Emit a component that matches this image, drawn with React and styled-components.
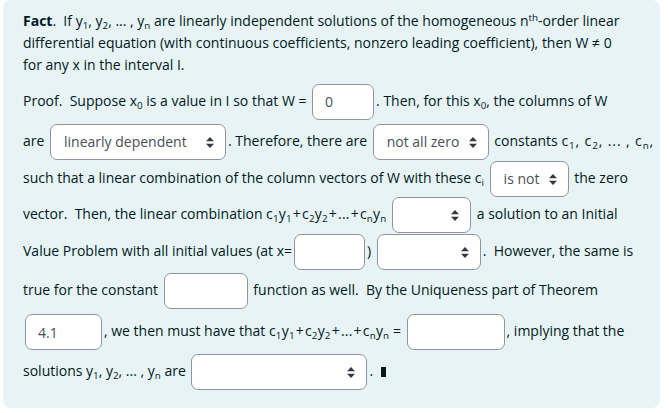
import styled, { createGlobalStyle } from "styled-components";

const GlobalStyle = createGlobalStyle`
  html, body {
    margin: 0;
    padding: 0;
    background: #ffffff;
  }
  body {
    font-family: "Open Sans", "Noto Sans", sans-serif;
    font-size: 14px;
    color: #001a1e;
  }
`;

const Card = styled.div`
  margin: 0 9px 0 3px;
  height: 408px;
  box-sizing: border-box;
  padding: 10px 20px 0;
  background: #e7f3f5;
  border-radius: 8px;
`;

const Fact = styled.p`
  margin: 0 0 5px;
  line-height: 22px;
  white-space: nowrap;
`;

const Line = styled.div`
  height: ${(p) => p.$h}px;
  line-height: ${(p) => p.$h}px;
  white-space: nowrap;
`;

const Field = styled.input`
  box-sizing: border-box;
  width: ${(p) => p.$w}px;
  height: 36px;
  margin: 0 2px;
  padding: 0 12px;
  vertical-align: middle;
  border: 1px solid #8f959e;
  border-radius: 7px;
  background: #ffffff;
  font: inherit;
  color: #495057;
  outline: none;
`;

const SelectBox = styled.span`
  box-sizing: border-box;
  display: inline-flex;
  align-items: center;
  justify-content: space-between;
  width: ${(p) => p.$w}px;
  height: 36px;
  margin: 0 2px;
  padding: 0 11px 0 13px;
  vertical-align: middle;
  border: 1px solid #8f959e;
  border-radius: 7px;
  background: #ffffff;
  color: #495057;
  line-height: 1;
`;

const Sub = styled.sub`
  font-size: 70%;
  line-height: 0;
  vertical-align: -0.3em;
`;

const Sup = styled.sup`
  font-size: 70%;
  line-height: 0;
  vertical-align: 0.55em;
`;

const Math = styled.span`
  letter-spacing: ${(p) => p.$ls || 0}px;
`;

const Plus = styled.span`
  margin: 0 1px;
`;

const Qed = styled.span`
  display: inline-block;
  width: 5px;
  height: 10px;
  margin-left: 8px;
  background: #001a1e;
  vertical-align: -1px;
`;

const Arrows = () => (
  <svg width="8" height="11" viewBox="0 0 8 11">
    <path d="M0 4.2 L4 0 L8 4.2 Z M0 6.8 L4 11 L8 6.8 Z" fill="#343a40" />
  </svg>
);

const Select = ({ w, children }) => (
  <SelectBox $w={w}>
    <span>{children}</span>
    <Arrows />
  </SelectBox>
);

const Ys = () => (
  <>
    y<Sub>1</Sub>, y<Sub>2</Sub>, ... , y<Sub>n</Sub>
  </>
);

const Combo = () => (
  <Math $ls={0.2}>
    c<Sub>1</Sub>y<Sub>1</Sub>
    <Plus>+</Plus>c<Sub>2</Sub>y<Sub>2</Sub>
    <Plus>+</Plus>...<Plus>+</Plus>c<Sub>n</Sub>y<Sub>n</Sub>
  </Math>
);

export default function App() {
  return (
    <>
      <GlobalStyle />
      <Card>
        <Fact>
          <b>Fact</b>.&nbsp; If <Ys /> are linearly independent solutions of the homogeneous n
          <Sup>th</Sup>-order linear
          <br />
          differential equation (with continuous coefficients, nonzero leading coefficient), then W ≠ 0
          <br />
          for any x in the interval I.
        </Fact>

        <Line $h={40}>
          Proof.&nbsp;&nbsp;Suppose x<Sub>0</Sub> is a value in I so that W = <Field $w={62} readOnly defaultValue="0" />. Then,
          for this x<Sub>0</Sub>, the columns of W
        </Line>
        <Line $h={39}>
          are <Select w={176}>linearly dependent</Select>. Therefore, there are <Select w={116}>not all zero</Select>{" "}
          constants{" "}
          <Math $ls={0.9}>
            c<Sub>1</Sub>, c<Sub>2</Sub>, ... , c<Sub>n</Sub>,
          </Math>
        </Line>
        <Line $h={36}>
          such that a linear combination of the column vectors of W with these c<Sub>i</Sub>{" "}
          <Select w={79}>is not</Select> the zero
        </Line>
        <Line $h={36}>
          vector.&nbsp; Then, the linear combination <Combo /> <Select w={79}></Select> a solution to an Initial
        </Line>
        <Line $h={38}>
          Value Problem with all initial values (at x=<Field $w={71} readOnly />) <Select w={104}></Select>.&nbsp; However,
          the same is
        </Line>
        <Line $h={40}>
          true for the constant <Field $w={84} readOnly /> function as well.&nbsp; By the Uniqueness part of Theorem
        </Line>
        <Line $h={41}>
          <Field $w={77} readOnly defaultValue="4.1" />, we then must have that <Combo /> ={" "}
          <Field $w={98} readOnly />, implying that the
        </Line>
        <Line $h={40}>
          solutions <Ys /> are <Select w={176}></Select>.<Qed />
        </Line>
      </Card>
    </>
  );
}
